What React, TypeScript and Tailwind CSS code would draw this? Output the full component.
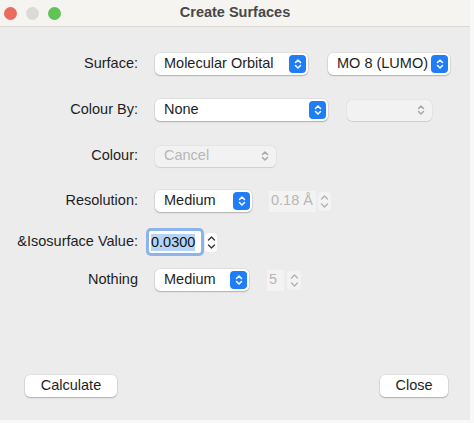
import React from "react";

const font = { fontFamily: '"Liberation Sans", Arial, sans-serif' };

function Chevrons({ stroke, w = 8, h = 12 }: { stroke: string; w?: number; h?: number }) {
  return (
    <svg width={w} height={h} viewBox="0 0 8 12" fill="none" aria-hidden>
      <path d="M1.5 4.5 L4 2 L6.5 4.5" stroke={stroke} strokeWidth="1.5" strokeLinecap="round" strokeLinejoin="round" />
      <path d="M1.5 7.5 L4 10 L6.5 7.5" stroke={stroke} strokeWidth="1.5" strokeLinecap="round" strokeLinejoin="round" />
    </svg>
  );
}

function Popup({ text, className }: { text: string; className: string }) {
  return (
    <div
      className={`flex items-center h-[22px] rounded-[5px] bg-white pl-[9px] pr-[2px] shadow-[0_0_0_0.5px_rgba(0,0,0,0.1),0_1px_1.5px_rgba(0,0,0,0.22)] text-[14.5px] text-[#1e1e1e] ${className}`}
    >
      <span className="truncate">{text}</span>
      <span className="ml-auto shrink-0 w-[17px] h-[18px] rounded-[4px] bg-[#1f7df5] flex items-center justify-center">
        <Chevrons stroke="#ffffff" />
      </span>
    </div>
  );
}

function DisabledPopup({ text, className }: { text?: string; className: string }) {
  return (
    <div
      className={`flex items-center h-[21px] rounded-[5px] bg-[#f2f2f2] pl-[9px] pr-[7px] shadow-[0_0_0_0.5px_rgba(0,0,0,0.05),0_0.5px_1px_rgba(0,0,0,0.1)] text-[14.5px] text-[#b6b6b6] ${className}`}
    >
      <span>{text}</span>
      <span className="ml-auto">
        <Chevrons stroke="#a8a8a8" />
      </span>
    </div>
  );
}

function Stepper({ className, stroke, bg }: { className: string; stroke: string; bg: string }) {
  return (
    <div className={`flex flex-col items-center justify-center h-[19px] rounded-[4px] ${bg} ${className}`}>
      <svg width="9" height="17" viewBox="0 0 9 17" fill="none" aria-hidden>
        <path d="M1.5 6 L4.5 3 L7.5 6" stroke={stroke} strokeWidth="1.3" strokeLinecap="round" strokeLinejoin="round" />
        <path d="M1.5 11 L4.5 14 L7.5 11" stroke={stroke} strokeWidth="1.3" strokeLinecap="round" strokeLinejoin="round" />
      </svg>
    </div>
  );
}

function Label({ children }: { children: React.ReactNode }) {
  return <div className="w-[138px] shrink-0 text-right text-[14.5px] text-[#1e1e1e] whitespace-nowrap">{children}</div>;
}

function Button({ children, className }: { children: React.ReactNode; className: string }) {
  return (
    <button
      className={`h-[22px] rounded-[5px] bg-white text-[14.5px] text-[#1e1e1e] shadow-[0_0_0_0.5px_rgba(0,0,0,0.1),0_1px_1.5px_rgba(0,0,0,0.22)] ${className}`}
    >
      {children}
    </button>
  );
}

export default function App() {
  return (
    <div className="w-[474px] h-[423px] bg-[#f8f8f8]" style={font}>
      <div className="w-[470px] h-[420px] bg-[#ececec] flex flex-col">
        {/* Title bar */}
        <div className="relative h-[27px] shrink-0 bg-[#f6f4f0] border-b border-[#dcd9d4] flex items-center pl-[4px] gap-[9px]">
          <span className="w-[13px] h-[13px] rounded-full bg-[#ed6a5e]" />
          <span className="w-[13px] h-[13px] rounded-full bg-[#dcdad6]" />
          <span className="w-[13px] h-[13px] rounded-full bg-[#5fc454]" />
          <div className="absolute inset-0 flex items-center justify-center text-[14.5px] font-bold text-[#474747] pointer-events-none">
            Create Surfaces
          </div>
        </div>

        {/* Surface */}
        <div className="flex items-center h-[22px] mt-[26px]">
          <Label>Surface:</Label>
          <Popup text="Molecular Orbital" className="ml-[17px] w-[153px]" />
          <Popup text="MO 8 (LUMO)" className="ml-[20px] w-[122px]" />
        </div>

        {/* Colour By */}
        <div className="flex items-center h-[22px] mt-[24px]">
          <Label>Colour By:</Label>
          <Popup text="None" className="ml-[17px] w-[173px]" />
          <DisabledPopup className="ml-[19px] w-[85px]" />
        </div>

        {/* Colour */}
        <div className="flex items-center h-[22px] mt-[24px]">
          <Label>Colour:</Label>
          <DisabledPopup text="Cancel" className="ml-[17px] w-[121px]" />
        </div>

        {/* Resolution */}
        <div className="flex items-center h-[22px] mt-[23px]">
          <Label>Resolution:</Label>
          <Popup text="Medium" className="ml-[17px] w-[97px]" />
          <div className="ml-[17px] w-[47px] h-[21px] bg-[#f3f3f3] pl-[2px] flex items-center text-[14.5px] text-[#b6b6b6]">
            0.18 Å
          </div>
          <Stepper className="ml-[2px] w-[13px]" stroke="#b0b0b0" bg="bg-[#f3f3f3]" />
        </div>

        {/* Isosurface */}
        <div className="flex items-center h-[22px] mt-[19px]">
          <Label>&amp;Isosurface Value:</Label>
          <div className="ml-[11px] w-[52px] h-[22px] bg-white rounded-[2px] shadow-[0_0_0_3px_rgba(110,160,235,0.75)] flex items-center pl-[2px]">
            <span className="bg-[#b4d4fa] text-[14.5px] text-[#111] leading-[17px]">0.0300</span>
          </div>
          <Stepper className="ml-[4px] w-[12px]" stroke="#333333" bg="bg-white" />
        </div>

        {/* Nothing */}
        <div className="flex items-center h-[22px] mt-[16px]">
          <Label>Nothing</Label>
          <Popup text="Medium" className="ml-[17px] w-[94px]" />
          <div className="ml-[18px] w-[17px] h-[21px] bg-[#f3f3f3] pl-[2px] flex items-center text-[14.5px] text-[#b6b6b6]">
            5
          </div>
          <Stepper className="ml-[3px] w-[14px]" stroke="#b0b0b0" bg="bg-[#f3f3f3]" />
        </div>

        {/* Buttons */}
        <div className="mt-auto mb-[23px] flex items-center justify-between pl-[25px] pr-[22px]">
          <Button className="w-[92px]">Calculate</Button>
          <Button className="w-[68px]">Close</Button>
        </div>
      </div>
    </div>
  );
}
